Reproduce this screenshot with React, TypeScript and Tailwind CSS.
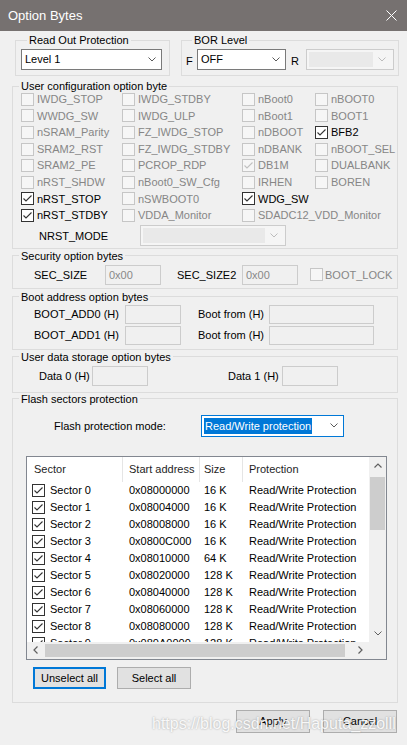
import React from "react";

type CheckProps = { label?: string; checked?: boolean; disabled?: boolean };

const configRows: (CheckProps | null)[][] = [
  [{ label: "IWDG_STOP", disabled: true }, { label: "IWDG_STDBY", disabled: true }, { label: "nBoot0", disabled: true }, { label: "nBOOT0", disabled: true }],
  [{ label: "WWDG_SW", disabled: true }, { label: "IWDG_ULP", disabled: true }, { label: "nBoot1", disabled: true }, { label: "BOOT1", disabled: true }],
  [{ label: "nSRAM_Parity", disabled: true }, { label: "FZ_IWDG_STOP", disabled: true }, { label: "nDBOOT", disabled: true }, { label: "BFB2", checked: true }],
  [{ label: "SRAM2_RST", disabled: true }, { label: "FZ_IWDG_STDBY", disabled: true }, { label: "nDBANK", disabled: true }, { label: "nBOOT_SEL", disabled: true }],
  [{ label: "SRAM2_PE", disabled: true }, { label: "PCROP_RDP", disabled: true }, { label: "DB1M", disabled: true, checked: true }, { label: "DUALBANK", disabled: true }],
  [{ label: "nRST_SHDW", disabled: true }, { label: "nBoot0_SW_Cfg", disabled: true }, { label: "IRHEN", disabled: true }, { label: "BOREN", disabled: true }],
  [{ label: "nRST_STOP", checked: true }, { label: "nSWBOOT0", disabled: true }, { label: "WDG_SW", checked: true }, null],
  [{ label: "nRST_STDBY", checked: true }, { label: "VDDA_Monitor", disabled: true }, { label: "SDADC12_VDD_Monitor", disabled: true }, null],
];

const sectors = [
  ["0x08000000", "16 K"],
  ["0x08004000", "16 K"],
  ["0x08008000", "16 K"],
  ["0x0800C000", "16 K"],
  ["0x08010000", "64 K"],
  ["0x08020000", "128 K"],
  ["0x08040000", "128 K"],
  ["0x08060000", "128 K"],
  ["0x08080000", "128 K"],
  ["0x080A0000", "128 K"],
];

function Chevron({ color = "#5a5a5a" }: { color?: string }) {
  return (
    <svg width="8" height="5" viewBox="0 0 8 5" className="shrink-0">
      <polyline points="0.5,0.5 4,4 7.5,0.5" fill="none" stroke={color} strokeWidth="1" />
    </svg>
  );
}

function Box({ checked, disabled }: { checked?: boolean; disabled?: boolean }) {
  return (
    <span
      className={`w-[13px] h-[13px] shrink-0 border flex items-center justify-center ${
        disabled ? "border-[#c6c6c6] bg-[#f6f6f6]" : "border-[#333333] bg-white"
      }`}
    >
      {checked && (
        <svg width="11" height="11" viewBox="0 0 11 11">
          <polyline points="1.5,5.5 4,8 9.5,2.5" fill="none" stroke={disabled ? "#c0c0c0" : "#333333"} strokeWidth="1.1" />
        </svg>
      )}
    </span>
  );
}

function Check({ label, checked, disabled }: CheckProps) {
  return (
    <div className="flex items-center h-[16.6px]">
      <Box checked={checked} disabled={disabled} />
      <span className={`ml-[3px] whitespace-nowrap ${disabled ? "text-[#868686]" : "text-black"}`}>{label}</span>
    </div>
  );
}

function Combo({ className, value }: { className: string; value: string }) {
  return (
    <div className={`flex items-center bg-white border border-[#7a7a7a] ${className}`}>
      <span className="flex-1 pl-[3px] text-black">{value}</span>
      <span className="pr-[5px]">
        <Chevron />
      </span>
    </div>
  );
}

function DisabledCombo({ className }: { className: string }) {
  return (
    <div className={`flex items-stretch border border-[#cccccc] bg-[#f5f5f5] p-[2px] ${className}`}>
      <span className="flex-1 bg-[#e9e9e9]" />
      <span className="w-[18px] flex items-center justify-center">
        <Chevron color="#bcbcbc" />
      </span>
    </div>
  );
}

function Field({ className, value }: { className: string; value?: string }) {
  return (
    <div className={`flex items-center border border-[#cccccc] bg-[#f0f0f0] pl-[3px] text-[#888888] ${className}`}>
      {value}
    </div>
  );
}

function Legend({ children }: { children: React.ReactNode }) {
  return <legend className="ml-[6px] px-[2px] leading-[10px] text-black whitespace-nowrap">{children}</legend>;
}

function Button({ label, className }: { label: string; className: string }) {
  return (
    <div className={`flex items-center justify-center bg-[#e1e1e1] text-black ${className}`}>{label}</div>
  );
}

export default function App() {
  return (
    <div className="relative w-[407px] min-h-[745px] bg-[#f0f0f0] text-[11px] text-black font-['Liberation_Sans',Arial,sans-serif] overflow-hidden">
      {/* title bar */}
      <div className="h-[31px] bg-[#767170] flex items-center justify-between pl-[8px] pr-[10px]">
        <span className="text-[13px] text-white">Option Bytes</span>
        <svg width="11" height="11" viewBox="0 0 11 11">
          <path d="M0.5 0.5 L10.5 10.5 M10.5 0.5 L0.5 10.5" stroke="#ffffff" strokeWidth="1" />
        </svg>
      </div>

      {/* read out protection + BOR */}
      <div className="flex pl-[15px] gap-[11px] mt-[4px]">
        <fieldset className="w-[155px] border border-[#dcdcdc] pl-[5px] pb-[5px]">
          <Legend>Read Out Protection</Legend>
          <Combo className="mt-[4px] w-[141px] h-[21px]" value="Level 1" />
        </fieldset>
        <fieldset className="w-[218px] border border-[#dcdcdc] pl-[4px] pb-[5px]">
          <Legend>BOR Level</Legend>
          <div className="mt-[4px] flex items-center">
            <span className="w-[11px] mt-[3px]">F</span>
            <Combo className="w-[89px] h-[21px]" value="OFF" />
            <span className="ml-[5px] w-[15px] mt-[3px]">R</span>
            <DisabledCombo className="w-[88px] h-[21px]" />
          </div>
        </fieldset>
      </div>

      {/* user configuration */}
      <fieldset className="ml-[12px] mt-[5px] w-[386px] border border-[#dcdcdc] pb-[1px]">
        <Legend>User configuration option byte</Legend>
        <div className="grid grid-cols-[101px_120px_73px_1fr] pl-[8px]">
          {configRows.flat().map((c, i) => (c ? <Check key={i} {...c} /> : <div key={i} />))}
        </div>
        <div className="mt-[1px] h-[22px] flex items-center pl-[26px]">
          <span className="w-[101px]">NRST_MODE</span>
          <DisabledCombo className="w-[146px] h-[21px]" />
        </div>
      </fieldset>

      {/* security */}
      <fieldset className="ml-[12px] mt-[2px] w-[386px] border border-[#dcdcdc] pb-[3px]">
        <Legend>Security option bytes</Legend>
        <div className="mt-[4px] h-[20px] flex items-center pl-[21px]">
          <span className="w-[71px]">SEC_SIZE</span>
          <Field className="w-[56px] h-[20px]" value="0x00" />
          <span className="ml-[16px] w-[65px]">SEC_SIZE2</span>
          <Field className="w-[56px] h-[20px]" value="0x00" />
          <div className="ml-[12px] flex items-center">
            <Box disabled />
            <span className="ml-[2px] text-[#868686]">BOOT_LOCK</span>
          </div>
        </div>
      </fieldset>

      {/* boot address */}
      <fieldset className="ml-[12px] mt-[3px] w-[386px] border border-[#dcdcdc] pb-[4px]">
        <Legend>Boot address option bytes</Legend>
        <div className="mt-[3px] flex flex-col gap-[2px]">
          {["BOOT_ADD0 (H)", "BOOT_ADD1 (H)"].map((l) => (
            <div key={l} className="h-[19px] flex items-center pl-[21px]">
              <span className="w-[91px]">{l}</span>
              <Field className="w-[56px] h-[19px]" />
              <span className="ml-[17px] w-[71px]">Boot from (H)</span>
              <Field className="w-[105px] h-[19px]" />
            </div>
          ))}
        </div>
      </fieldset>

      {/* user data */}
      <fieldset className="ml-[12px] mt-[2px] w-[386px] border border-[#dcdcdc] pb-[6px]">
        <Legend>User data storage option bytes</Legend>
        <div className="mt-[4px] h-[20px] flex items-center pl-[26px]">
          <span className="w-[53px]">Data 0 (H)</span>
          <Field className="w-[56px] h-[20px]" />
          <span className="ml-[80px] w-[54px]">Data 1 (H)</span>
          <Field className="w-[56px] h-[20px]" />
        </div>
      </fieldset>

      {/* flash sectors protection */}
      <fieldset className="ml-[12px] mt-[1px] w-[386px] border border-[#dcdcdc] pb-[13px]">
        <Legend>Flash sectors protection</Legend>
        <div className="mt-[11px] h-[22px] flex items-center pl-[41px]">
          <span className="w-[147px]">Flash protection mode:</span>
          <div className="w-[143px] h-[22px] flex items-center bg-white border border-[#0078d7]">
            <span className="ml-[2px] px-[1px] h-[16px] flex items-center bg-[#0078d7] text-white">Read/Write protection</span>
            <span className="flex-1" />
            <span className="pr-[5px]">
              <Chevron />
            </span>
          </div>
        </div>

        <div className="mt-[19px] ml-[13px] w-[361px] h-[204px] border border-[#828790] bg-white flex flex-col">
          <div className="flex flex-1 min-h-0">
            <div className="flex-1 min-w-0 overflow-hidden">
              <div className="h-[25px] grid grid-cols-[96px_77px_43px_1fr] text-[#1e1e1e]">
                <div className="flex items-center pl-[7px] border-r border-[#e5e5e5]">Sector</div>
                <div className="flex items-center pl-[6px] border-r border-[#e5e5e5] whitespace-nowrap">Start address</div>
                <div className="flex items-center pl-[4px] border-r border-[#e5e5e5]">Size</div>
                <div className="flex items-center pl-[6px]">Protection</div>
              </div>
              {sectors.map(([addr, size], i) => (
                <div key={i} className="h-[17px] grid grid-cols-[96px_77px_43px_1fr] items-center whitespace-nowrap">
                  <div className="flex items-center pl-[5px]">
                    <Box checked />
                    <span className="ml-[5px]">Sector {i}</span>
                  </div>
                  <div className="pl-[6px]">{addr}</div>
                  <div className="pl-[4px]">{size}</div>
                  <div className="pl-[6px]">Read/Write Protection</div>
                </div>
              ))}
            </div>
            <div className="w-[17px] bg-[#f0f0f0] flex flex-col">
              <div className="h-[17px] flex items-center justify-center">
                <svg width="8" height="5" viewBox="0 0 8 5">
                  <polyline points="0.5,4.5 4,1 7.5,4.5" fill="none" stroke="#606060" strokeWidth="1.2" />
                </svg>
              </div>
              <div className="mx-[1px] mt-[3px] h-[53px] bg-[#cdcdcd]" />
              <div className="flex-1" />
              <div className="h-[17px] flex items-center justify-center">
                <Chevron color="#606060" />
              </div>
            </div>
          </div>
          <div className="h-[17px] flex bg-[#f0f0f0]">
            <div className="w-[17px] flex items-center justify-center">
              <svg width="5" height="8" viewBox="0 0 5 8">
                <polyline points="4.5,0.5 1,4 4.5,7.5" fill="none" stroke="#606060" strokeWidth="1.2" />
              </svg>
            </div>
            <div className="ml-[1px] my-[2px] w-[300px] bg-[#cdcdcd]" />
            <div className="flex-1" />
            <div className="w-[17px] flex items-center justify-center">
              <svg width="5" height="8" viewBox="0 0 5 8">
                <polyline points="0.5,0.5 4,4 0.5,7.5" fill="none" stroke="#606060" strokeWidth="1.2" />
              </svg>
            </div>
            <div className="w-[17px]" />
          </div>
        </div>

        <div className="mt-[7px] ml-[20px] flex gap-[11px]">
          <Button label="Unselect all" className="w-[73px] h-[22px] border-2 border-[#0078d7]" />
          <Button label="Select all" className="w-[74px] h-[22px] border border-[#adadad]" />
        </div>
      </fieldset>

      <div className="mt-[7px] flex justify-end gap-[13px] pr-[10px]">
        <Button label="Apply" className="w-[74px] h-[23px] border border-[#adadad]" />
        <Button label="Cancel" className="w-[74px] h-[23px] border border-[#adadad]" />
      </div>

      {/* watermark */}
      <div className="absolute left-[152px] top-[712px] text-[16px] text-white/90 whitespace-nowrap [text-shadow:0_0_2px_rgba(0,0,0,0.35)]">
        https://blog.csdn.net/Haputa_zzolll
      </div>
    </div>
  );
}
